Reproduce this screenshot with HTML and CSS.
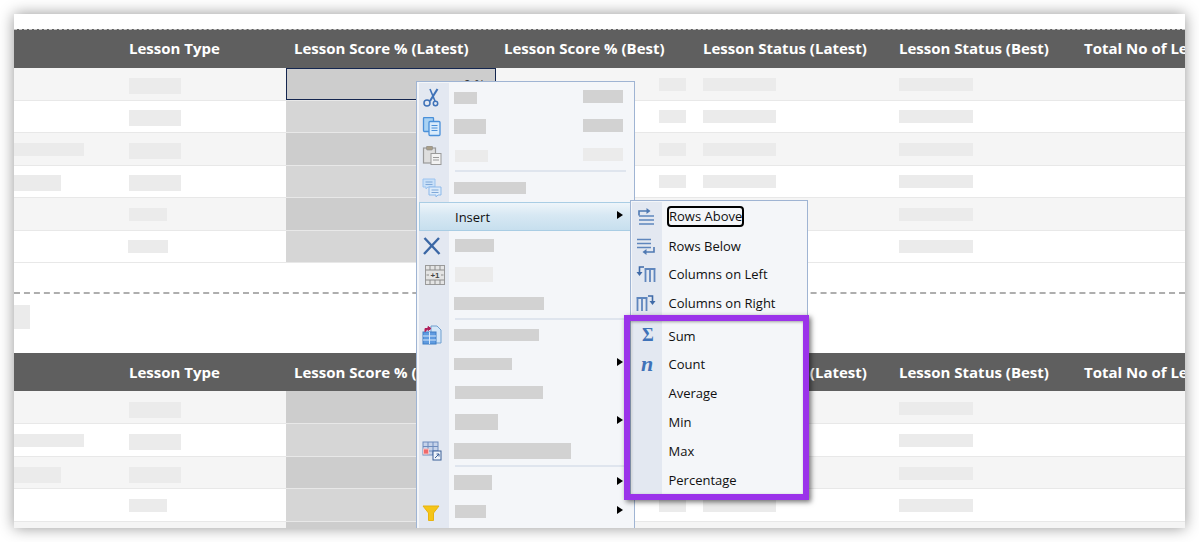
FILE: index.html
```html
<!DOCTYPE html>
<html lang="en">
<head>
<meta charset="utf-8">
<title>Lesson report</title>
<link rel="stylesheet" href="styles.css">
</head>
<body>
<main class="sheet">
  <section class="table t1">
    <div class="head">
      <div class="c c0"></div><div class="c c1">Lesson Type</div><div class="c c2">Lesson Score % (Latest)</div><div class="c c3">Lesson Score % (Best)</div><div class="c c4">Lesson Status (Latest)</div><div class="c c5">Lesson Status (Best)</div><div class="c c6">Total No of Lessons</div>
    </div>
    <div class="row">
      <div class="c c0"></div><div class="c c1"><i class="bar w52 tall"></i></div><div class="c c2 score selected"><span class="pct">0 %</span></div><div class="c c3"><i class="bar w27"></i></div><div class="c c4"><i class="bar w73"></i></div><div class="c c5"><i class="bar w74"></i></div><div class="c c6"></div>
    </div>
    <div class="row short">
      <div class="c c0"></div><div class="c c1"><i class="bar w52 tall"></i></div><div class="c c2 score"></div><div class="c c3"><i class="bar w27"></i></div><div class="c c4"><i class="bar w73"></i></div><div class="c c5"><i class="bar w74"></i></div><div class="c c6"></div>
    </div>
    <div class="row">
      <div class="c c0"><i class="bar w70"></i></div><div class="c c1"><i class="bar w52 tall"></i></div><div class="c c2 score"></div><div class="c c3"><i class="bar w27"></i></div><div class="c c4"><i class="bar w73"></i></div><div class="c c5"><i class="bar w74"></i></div><div class="c c6"></div>
    </div>
    <div class="row short">
      <div class="c c0"><i class="bar w47 tall"></i></div><div class="c c1"><i class="bar w52 tall"></i></div><div class="c c2 score"></div><div class="c c3"><i class="bar w27"></i></div><div class="c c4"><i class="bar w73"></i></div><div class="c c5"><i class="bar w74"></i></div><div class="c c6"></div>
    </div>
    <div class="row">
      <div class="c c0"></div><div class="c c1"><i class="bar w38"></i></div><div class="c c2 score"></div><div class="c c3"><i class="bar w27"></i></div><div class="c c4"><i class="bar w73"></i></div><div class="c c5"><i class="bar w74"></i></div><div class="c c6"></div>
    </div>
    <div class="row short">
      <div class="c c0"></div><div class="c c1"><i class="bar w40 nudge"></i></div><div class="c c2 score"></div><div class="c c3"><i class="bar w27"></i></div><div class="c c4"><i class="bar w73"></i></div><div class="c c5"><i class="bar w74"></i></div><div class="c c6"></div>
    </div>
  </section>

  <div class="divider"></div>
  <div class="title-stub"></div>

  <section class="table t2">
    <div class="head">
      <div class="c c0"></div><div class="c c1">Lesson Type</div><div class="c c2">Lesson Score % (Latest)</div><div class="c c3">Lesson Score % (Best)</div><div class="c c4">Lesson Status (Latest)</div><div class="c c5">Lesson Status (Best)</div><div class="c c6">Total No of Lessons</div>
    </div>
    <div class="row first">
      <div class="c c0"></div><div class="c c1"><i class="bar w52 tall"></i></div><div class="c c2 score"></div><div class="c c3"><i class="bar w27"></i></div><div class="c c4"><i class="bar w73"></i></div><div class="c c5"><i class="bar w74"></i></div><div class="c c6"></div>
    </div>
    <div class="row">
      <div class="c c0"><i class="bar w70"></i></div><div class="c c1"><i class="bar w52 tall"></i></div><div class="c c2 score"></div><div class="c c3"><i class="bar w27"></i></div><div class="c c4"><i class="bar w73"></i></div><div class="c c5"><i class="bar w74"></i></div><div class="c c6"></div>
    </div>
    <div class="row short">
      <div class="c c0"><i class="bar w47 tall"></i></div><div class="c c1"><i class="bar w52 tall"></i></div><div class="c c2 score"></div><div class="c c3"><i class="bar w27"></i></div><div class="c c4"><i class="bar w73"></i></div><div class="c c5"><i class="bar w74"></i></div><div class="c c6"></div>
    </div>
    <div class="row">
      <div class="c c0"></div><div class="c c1"><i class="bar w38"></i></div><div class="c c2 score"></div><div class="c c3"><i class="bar w27"></i></div><div class="c c4"><i class="bar w73"></i></div><div class="c c5"><i class="bar w74"></i></div><div class="c c6"></div>
    </div>
    <div class="row">
      <div class="c c0"></div><div class="c c1"></div><div class="c c2 score"></div><div class="c c3"></div><div class="c c4"></div><div class="c c5"></div><div class="c c6"></div>
    </div>
  </section>

  <nav class="menu">
    <div class="list">
      <div class="item"><span class="ico"><svg viewBox="0 0 20 20"><g fill="none" stroke="#3f72b8"><path d="M15.500 1 8 13" stroke-width="2"/><path d="M8 1 13 13" stroke-width="1.600"/><circle cx="5" cy="15" r="3" stroke-width="1.500"/><circle cx="13.500" cy="15.500" r="2.200" stroke-width="1.500"/></g></svg></span><i class="mbar w23 h12"></i><i class="key"></i></div>
      <div class="item"><span class="ico"><svg viewBox="0 0 20 20"><rect x="1.500" y=".5" width="10" height="14" rx="1" fill="#a9d2f3" stroke="#4a90d9" stroke-width="1.300"/><rect x="7" y="4.500" width="11" height="14" rx="1" fill="#d9ebfb" stroke="#4a90d9" stroke-width="1.300"/><path d="M9.500 8.500h6M9.500 11h6M9.500 13.500h6" stroke="#4a90d9"/></svg></span><i class="mbar w32 h15"></i><i class="key"></i></div>
      <div class="item"><span class="ico"><svg viewBox="0 0 20 20"><rect x="1.500" y="2" width="12" height="15" fill="#dedede" stroke="#9a9a9a" stroke-width="1.200"/><rect x="4.500" y="0" width="6" height="4" rx="1" fill="#a99f8a" stroke="#8a8a8a" stroke-width=".6"/><rect x="9" y="7.500" width="10" height="11" fill="#f2f2f2" stroke="#9a9a9a"/><path d="M11 11.500h6M11 14h6" stroke="#9a9a9a"/></svg></span><i class="mbar w33 h12 pale nudge"></i><i class="key pale"></i></div>
      <div class="sep"></div>
      <div class="item"><span class="ico"><svg viewBox="0 0 20 20"><path d="M1 1h12v8H6L4 11V9H1z" fill="#c9e0f8" stroke="#9cc4ef"/><path d="M7 9h12v8h-3l-2 2v-2H7z" fill="#dcebfa" stroke="#8db9ea"/><path d="M3.500 4h7M3.500 6.500h7M9.500 12h7M9.500 14.500h7" stroke="#7fa8d8"/></svg></span><i class="mbar w72 h12"></i></div>
      <div class="item active"><span class="ico"></span><span class="label">Insert</span><i class="arrow"></i></div>
      <div class="item"><span class="ico"><svg viewBox="0 0 20 20"><path d="M2.500 2 17.500 18M17 2 2 18" fill="none" stroke="#3b67a5" stroke-width="2.400"/></svg></span><i class="mbar w39 h13 nudge"></i></div>
      <div class="item"><span class="ico shift"><svg viewBox="0 0 20 20"><rect x=".5" y=".5" width="19" height="19" fill="#e4e4e4" stroke="#9a9a9a"/><path d="M.5 5h19M.5 15h19M5 .5v4.500M10 .5v4.500M15 .5v4.500M5 15v4.500M10 15v4.500M15 15v4.500M1.500 10h2.500M16 10h2.500" stroke="#8e8e8e"/><text x="10" y="13" class="plus">+1</text></svg></span><i class="mbar w38 h15 pale nudge"></i></div>
      <div class="item"><span class="ico"></span><i class="mbar w90 h13"></i></div>
      <div class="sep thin"></div>
      <div class="item"><span class="ico"><svg viewBox="0 0 20 20"><path d="M9 1h6l4 4v13H9z" fill="#d4e6f7" stroke="#6f9fd0"/><rect x="1" y="7" width="13" height="12" fill="#5f9be0" stroke="#3f7cc4"/><path d="M1 11h13M1 15h13M7.500 7v12" stroke="#d7e8fa"/><path d="M3 7V3.500h4M6 1.500l3 2-3 2z" fill="#b01e5a" stroke="#b01e5a"/></svg></span><i class="mbar w85 h12"></i></div>
      <div class="item"><span class="ico"></span><i class="mbar w58 h12"></i><i class="arrow"></i></div>
      <div class="item"><span class="ico"></span><i class="mbar w88 h13 nudge"></i></div>
      <div class="item"><span class="ico"></span><i class="mbar w43 h16 nudge"></i><i class="arrow"></i></div>
      <div class="item"><span class="ico"><svg viewBox="0 0 20 20"><rect x="1" y="1" width="15" height="13" fill="#c6d3ea" stroke="#6f8cbd"/><path d="M1 5.500h15M1 10h15M6 1v13M11 1v13" stroke="#6f8cbd"/><rect x="1.500" y="8" width="5" height="5" fill="#f0696a" stroke="#f8c0c0"/><rect x="11" y="10" width="8" height="9" fill="#eef3fa" stroke="#3b5f97"/><path d="m13 17 4-4M14.500 13H17v2.500" fill="none" stroke="#3b5f97"/></svg></span><i class="mbar w117 h16"></i></div>
      <div class="sep"></div>
      <div class="item"><span class="ico"></span><i class="mbar w38 h15"></i><i class="arrow"></i></div>
      <div class="item"><span class="ico"><svg viewBox="0 0 20 20"><path d="M1 4h16l-5.500 7v7.500h-5V11z" fill="#f5c518" stroke="#e8b30f"/></svg></span><i class="mbar w31 h13 nudge"></i><i class="arrow"></i></div>
    </div>

    <div class="submenu">
      <div class="subitem"><span class="subico"><svg viewBox="0 0 20 20"><path d="M3 8.500V4h8" fill="none" stroke="#4f79b2" stroke-width="1.600"/><path d="m10.500 1 4 3-4 3z" fill="#4f79b2"/><path d="M3 9h15M3 13h15M3 17h15" stroke="#5f86bd" stroke-width="1.700"/></svg></span><span class="focus">Rows Above</span></div>
      <div class="subitem"><span class="subico"><svg viewBox="0 0 20 20"><path d="M1 3.500h14M1 7.500h14M1 11.500h14" stroke="#5f86bd" stroke-width="1.700"/><path d="M18 11v5H10" fill="none" stroke="#4f79b2" stroke-width="1.600"/><path d="m10.500 13-4 3 4 3z" fill="#4f79b2"/></svg></span><span>Rows Below</span></div>
      <div class="subitem"><span class="subico"><svg viewBox="0 0 20 20"><path d="M8 3H3.500v6" fill="none" stroke="#3f6aa8" stroke-width="1.600"/><path d="M.5 8h6l-3 4z" fill="#3f6aa8"/><path d="M8.500 5h11M9.500 5v13M14 5v13M18.500 5v13" fill="none" stroke="#5f86bd" stroke-width="1.800"/></svg></span><span>Columns on Left</span></div>
      <div class="subitem"><span class="subico"><svg viewBox="0 0 20 20"><path d="M.5 5h11M1.500 5v13M6 5v13M10.500 5v13" fill="none" stroke="#5f86bd" stroke-width="1.800"/><path d="M12 3h4.500v6" fill="none" stroke="#3f6aa8" stroke-width="1.600"/><path d="M13.500 8h6l-3 4z" fill="#3f6aa8"/></svg></span><span>Columns on Right</span></div>
      <div class="subgap"></div>
      <div class="subitem"><span class="subico glyph">Σ</span><span>Sum</span></div>
      <div class="subitem"><span class="subico glyph italic">n</span><span>Count</span></div>
      <div class="subitem"><span class="subico"></span><span>Average</span></div>
      <div class="subitem"><span class="subico"></span><span>Min</span></div>
      <div class="subitem"><span class="subico"></span><span>Max</span></div>
      <div class="subitem"><span class="subico"></span><span>Percentage</span></div>
    </div>
  </nav>

  <div class="annotation"></div>
</main>
</body>
</html>
```
FILE: styles.css
```css
* { box-sizing: border-box; }
html, body { height: 100%; }
body {
  margin: 0;
  padding: 14px;
  background: #fff;
  overflow: hidden;
  font-family: "Open Sans", "Liberation Sans", sans-serif;
}
.sheet {
  position: relative;
  width: 1171px;
  height: 514px;
  background: #fff;
  overflow: hidden;
}
body::before {
  content: "";
  position: fixed;
  left: 14px;
  top: 14px;
  width: 1171px;
  height: 514px;
  box-shadow: 0 0 14px rgba(0, 0, 0, .42);
}

.table { display: flex; flex-direction: column; }
.t1 { margin-top: 15px; }
.t1 .head { border-top: 1px dashed #c4c4c4; height: 39px; line-height: 36px; }
.t2 { margin-top: 24px; }
.t2 .head { height: 38px; line-height: 38px; }

.head, .row { display: flex; flex: none; width: 1171px; }
.head {
  background: #5f5f5f;
  color: #fff;
  font-weight: 700;
  font-size: 15px;
  white-space: nowrap;
}
.head .c { padding-left: 8px; overflow: hidden; }
.head .c0 { padding-left: 0; }

.row {
  --pad: 10px;
  height: 33px;
  border-bottom: 1px solid #e8e8e8;
  background: #fff;
}
.row.short { --pad: 9px; height: 32px; }
.table .row:nth-child(even) { background: #f5f5f5; }
.t2 .row { --pad: 10px; }
.t2 .row.first { --pad: 11px; }

.c { flex: none; }
.row .c { display: flex; align-items: flex-start; padding: var(--pad) 0 0 8px; }
.row .c0 { padding-left: 0; }
.row .c3 { justify-content: flex-end; padding-right: 9px; }
.c0 { width: 107px; }
.c1 { width: 165px; }
.c2 { width: 210px; }
.c3 { width: 199px; }
.c4 { width: 196px; }
.c5 { width: 185px; }
.c6 { width: 109px; }

.row .score {
  background: #d6d6d6;
  justify-content: flex-end;
  padding: 0;
}
.table .row:nth-child(even) .score { background: #cdcdcd; }
.score.selected { border: 1px solid #14264f; align-items: center; }
.pct { font-size: 13px; color: #333; padding-right: 10px; }

.bar { display: block; height: 13px; background: #ebebeb; }
.bar.tall { height: 16px; }
.bar.nudge { margin-left: -1px; }
.w27 { width: 27px; }
.w38 { width: 38px; }
.w40 { width: 40px; }
.w47 { width: 47px; }
.w52 { width: 52px; }
.w70 { width: 70px; }
.w73 { width: 73px; }
.w74 { width: 74px; }

.divider { margin-top: 29px; height: 2px; border-top: 2px dashed #aeaeae; }
.title-stub { margin-top: 11px; width: 16px; height: 24px; background: #ebebeb; }

/* context menu */
.menu {
  position: absolute;
  left: 402px;
  top: 67px;
  width: 219px;
  height: 470px;
  padding: 1px 2px;
  background: #f4f6f9;
  border: 1px solid #9fb4d3;
}
.list { background: linear-gradient(90deg, #e3e8f1 30px, #f4f6f9 30px); height: 100%; }
.item {
  display: flex;
  align-items: center;
  height: 29px;
  padding-right: 9px;
  font-size: 13px;
  color: #101010;
}
.ico {
  flex: none;
  width: 30px;
  height: 29px;
  display: flex;
  align-items: center;
  padding-left: 3px;
}
.ico.shift { padding-left: 6px; }
.ico svg { width: 20px; height: 20px; display: block; }
.plus { font: 700 8px "Liberation Sans", sans-serif; fill: #444; text-anchor: middle; }
.mbar { display: block; margin-left: 5px; background: #d2d2d2; flex: none; }
.mbar.pale { background: #ebebeb; }
.mbar.nudge { margin-left: 6px; }
.h12 { height: 12px; }
.h13 { height: 13px; }
.h15 { height: 15px; }
.h16 { height: 16px; }
.w23 { width: 23px; }
.w31 { width: 31px; }
.w32 { width: 32px; }
.w33 { width: 33px; }
.w39 { width: 39px; }
.w43 { width: 43px; }
.w58 { width: 58px; }
.w72 { width: 72px; }
.w85 { width: 85px; }
.w88 { width: 88px; }
.w90 { width: 90px; }
.w117 { width: 117px; }
.key { display: block; width: 40px; height: 13px; margin-left: auto; margin-bottom: 3px; background: #d2d2d2; }
.key.pale { background: #ebebeb; }
.sep { height: 3px; margin-left: 0; padding: 0 6px 0 36px; }
.sep::after { content: ""; display: block; height: 2px; margin-top: 0; background: #dfe5ee; }
.sep.thin { height: 2px; }
.item.active {
  background: linear-gradient(180deg, #eef5fa 0%, #d7e8f3 45%, #c7dfee 100%);
  border: 1px solid #a9cde4;
  padding-right: 8px;
}
.item.active .ico { height: 27px; width: 35px; }
.label { flex: 1; }
.arrow {
  display: block;
  flex: none;
  width: 0;
  height: 0;
  margin-left: auto;
  margin-top: -4px;
  border-left: 6px solid #000;
  border-top: 4.500px solid transparent;
  border-bottom: 4.500px solid transparent;
}

/* submenu */
.submenu {
  position: absolute;
  left: 213px;
  top: 118px;
  width: 178px;
  height: 300px;
  padding: 1px;
  background: #f4f6f9;
  border: 1px solid #9fb4d3;
}
.submenu::before {
  content: "";
  position: absolute;
  left: 1px;
  top: 1px;
  bottom: 1px;
  width: 30px;
  background: #e3e8f1;
}
.subitem {
  position: relative;
  display: flex;
  align-items: center;
  height: 28.800px;
  top: .5px;
  font-size: 13px;
  color: #101010;
}
.subgap { height: 3.600px; }
.subico {
  flex: none;
  width: 36.500px;
  display: flex;
  align-items: center;
  padding-left: 4px;
}
.subico svg { width: 20px; height: 20px; display: block; }
.glyph {
  padding-left: 10px;
  font: 700 18px "Liberation Serif", serif;
  color: #3f72b8;
}
.glyph.italic { font-style: italic; font-size: 22px; padding-left: 9px; }
.focus {
  margin: 0 0 0 -0.500px;
  padding: 0 1px;
  outline: 2px solid #000;
  outline-offset: -1px;
  border-radius: 3px;
  line-height: 19px;
}

.annotation {
  position: absolute;
  left: 610px;
  top: 301px;
  width: 185px;
  height: 185px;
  border: 6px solid #9b33ea;
  box-shadow: 2px 2px 5px rgba(0, 0, 0, .55), inset 1px 1px 3px rgba(0, 0, 0, .35);
}
```
